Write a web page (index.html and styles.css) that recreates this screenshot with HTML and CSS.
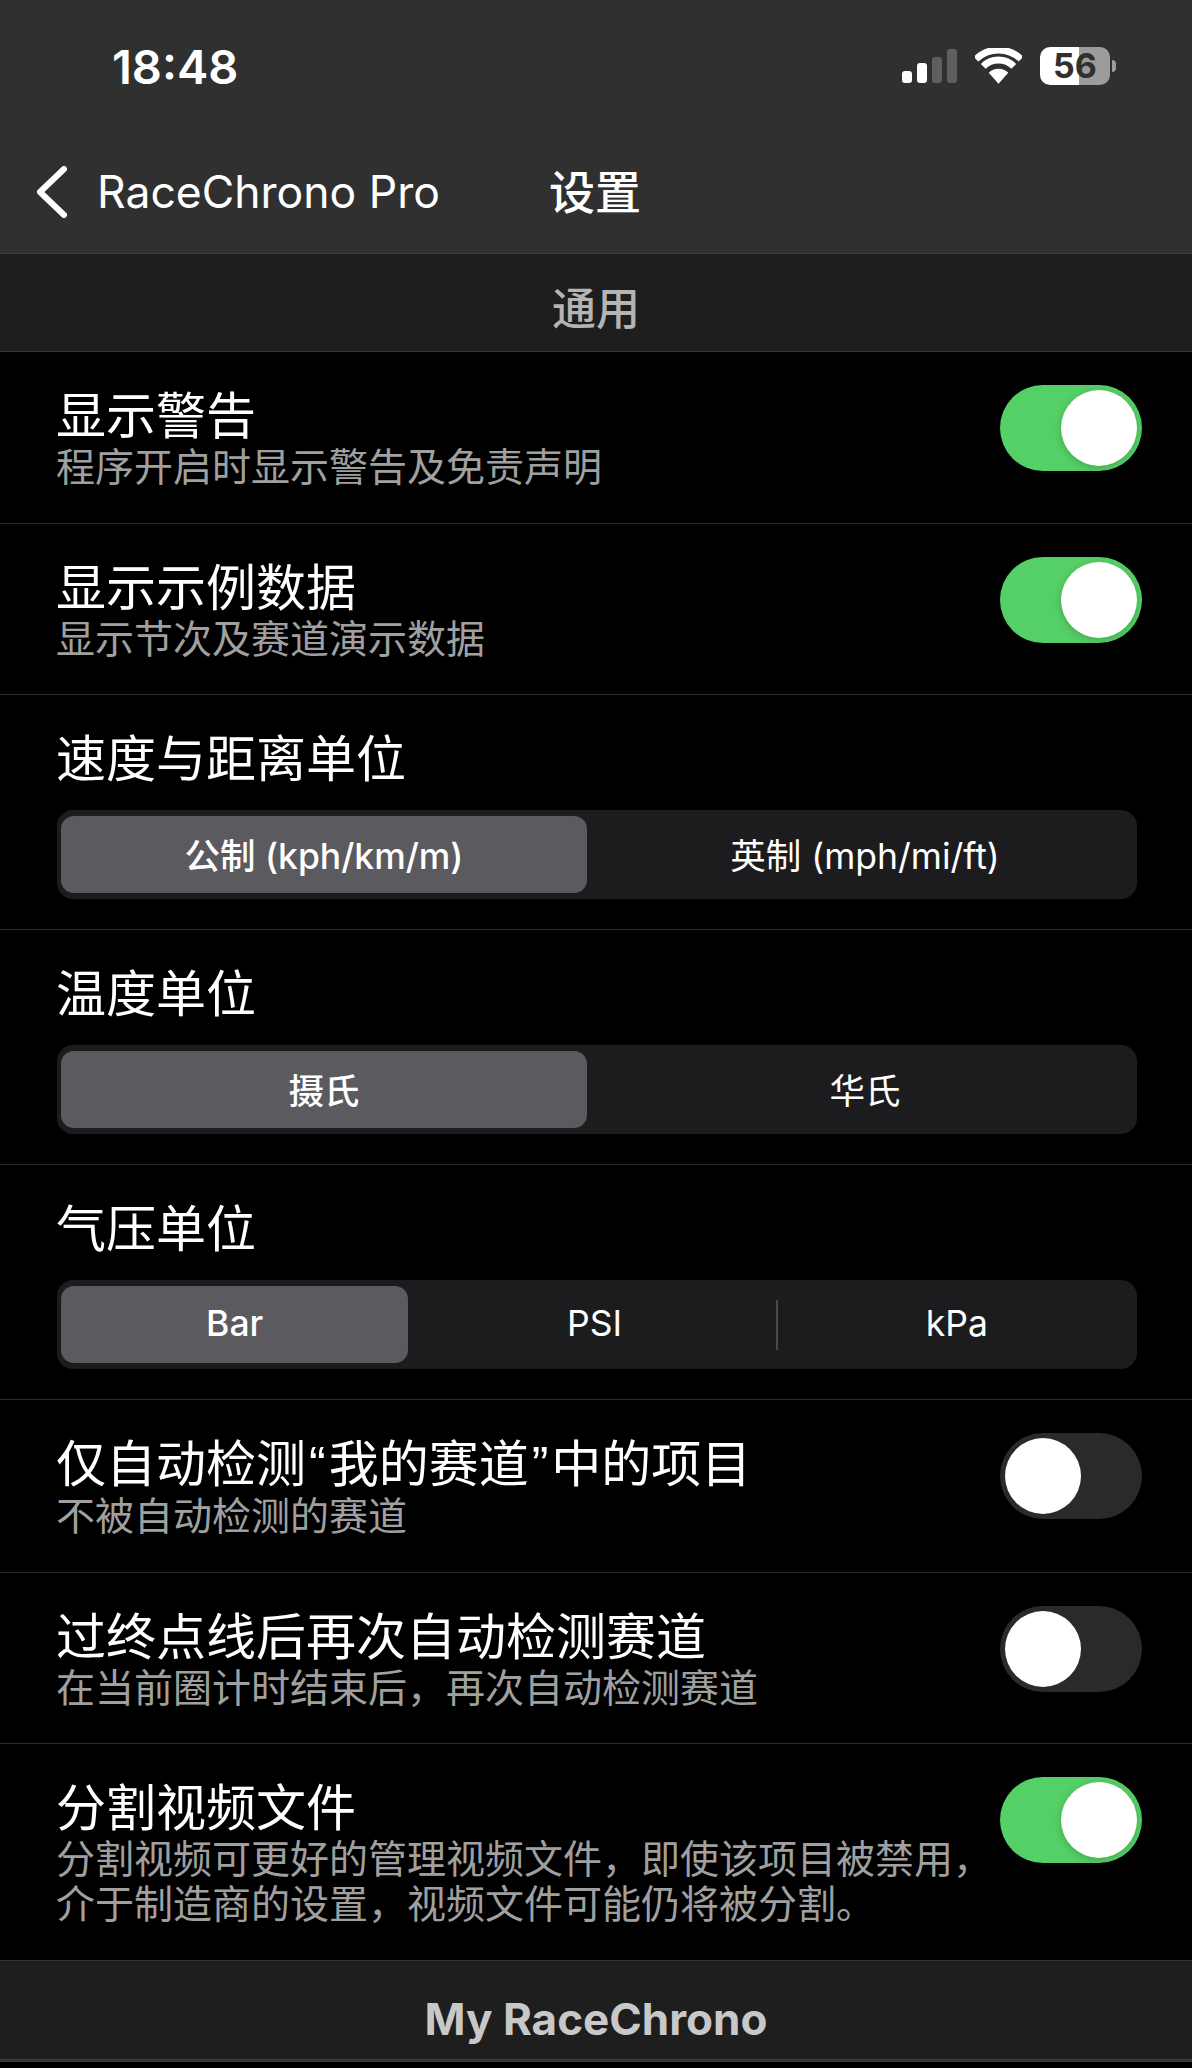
FILE: index.html
```html
<!DOCTYPE html>
<html lang="zh-CN">
<head>
  <meta charset="UTF-8" />
  <meta name="viewport" content="width=device-width, initial-scale=1.0" />
  <title>设置</title>
  <link rel="stylesheet" href="styles.css">
</head>
<body>

  <header class="top">
    <div class="status">
      <span class="time">18:48</span>
      <div class="status-icons">
        <div class="signal">
          <i class="bar b1"></i>
          <i class="bar b2"></i>
          <i class="bar b3 dim"></i>
          <i class="bar b4 dim"></i>
        </div>
        <svg class="wifi" viewBox="0 0 48 36" aria-hidden="true">
          <path d="M24 36 L14 25 A14 14 0 0 1 34 25 Z" fill="#fff"/>
          <path d="M8.4 18.4 A22 22 0 0 1 39.6 18.4" fill="none" stroke="#fff" stroke-width="7"/>
          <path d="M1 11 A33 33 0 0 1 47 11" fill="none" stroke="#fff" stroke-width="7"/>
        </svg>
        <div class="battery"><span>56</span></div>
        <i class="battery-nub"></i>
      </div>
    </div>
    <nav class="nav">
      <a class="back">
        <svg class="chevron" viewBox="0 0 32 52" aria-hidden="true">
          <path d="M28 3 L4 26 L28 49" fill="none" stroke="#fff" stroke-width="6" stroke-linecap="round" stroke-linejoin="round"/>
        </svg>
        RaceChrono Pro
      </a>
      <h1>设置</h1>
    </nav>
  </header>

  <div class="section">通用</div>

  <div class="row">
    <div class="row-text">
      <div class="title">显示警告</div>
      <div class="sub">程序开启时显示警告及免责声明</div>
    </div>
    <div class="toggle on"><i></i></div>
  </div>

  <div class="row">
    <div class="row-text">
      <div class="title">显示示例数据</div>
      <div class="sub">显示节次及赛道演示数据</div>
    </div>
    <div class="toggle on"><i></i></div>
  </div>

  <div class="row stacked">
    <div class="title">速度与距离单位</div>
    <div class="seg two">
      <div class="seg-item active">公制 (kph/km/m)</div>
      <div class="seg-item">英制 (mph/mi/ft)</div>
    </div>
  </div>

  <div class="row stacked">
    <div class="title">温度单位</div>
    <div class="seg two">
      <div class="seg-item active">摄氏</div>
      <div class="seg-item">华氏</div>
    </div>
  </div>

  <div class="row stacked">
    <div class="title">气压单位</div>
    <div class="seg three">
      <div class="seg-item active">Bar</div>
      <div class="seg-item">PSI</div>
      <div class="seg-item divided">kPa</div>
    </div>
  </div>

  <div class="row">
    <div class="row-text">
      <div class="title">仅自动检测<span class="quote">“</span>我的赛道<span class="quote">”</span>中的项目</div>
      <div class="sub">不被自动检测的赛道</div>
    </div>
    <div class="toggle"><i></i></div>
  </div>

  <div class="row">
    <div class="row-text">
      <div class="title">过终点线后再次自动检测赛道</div>
      <div class="sub">在当前圈计时结束后，再次自动检测赛道</div>
    </div>
    <div class="toggle"><i></i></div>
  </div>

  <div class="row last">
    <div class="row-text">
      <div class="title">分割视频文件</div>
      <div class="sub">分割视频可更好的管理视频文件，即使该项目被禁用，<br>介于制造商的设置，视频文件可能仍将被分割。</div>
    </div>
    <div class="toggle on"><i></i></div>
  </div>

  <div class="section foot">My RaceChrono</div>

</body>
</html>
```

FILE: styles.css
```css
body {
  margin: 0;
  background-color: #000;
  color: #fff;
  font-family: Inter, "Noto Sans CJK SC", sans-serif;
}

.top {
  height: 253px;
  background-color: #303030;
  border-bottom: 1px solid #3c3c3c;
}

.status {
  display: flex;
  justify-content: space-between;
  align-items: center;
  height: 132px;
  padding: 0 76px 0 112px;
}

.time {
  font-size: 47px;
  font-weight: 600;
}

.status-icons {
  display: flex;
  align-items: center;
}

.signal {
  display: flex;
  align-items: flex-end;
  gap: 5px;
  height: 34px;
  margin-right: 18px;
}

.bar {
  width: 10px;
  border-radius: 3px;
  background-color: #fff;
}

.bar.dim {
  background-color: #5f5f5f;
}

.b1 { height: 12px; }
.b2 { height: 20px; }
.b3 { height: 26px; }
.b4 { height: 34px; }

.wifi {
  width: 47px;
  height: 36px;
  margin-right: 18px;
}

.battery {
  width: 70px;
  height: 38px;
  border-radius: 10px;
  background: linear-gradient(to right, #fff 0 39px, #9c9c9c 39px);
  color: #303030;
  font-size: 34px;
  font-weight: 700;
  line-height: 38px;
  text-align: center;
}

.battery-nub {
  width: 4px;
  height: 12px;
  margin-left: 2px;
  border-radius: 0 6px 6px 0;
  background-color: #9c9c9c;
}

.nav {
  position: relative;
  display: flex;
  align-items: center;
  height: 120px;
  padding-left: 36px;
}

.back {
  display: flex;
  align-items: center;
  gap: 29px;
  font-size: 44.5px;
}

.chevron {
  width: 32px;
  height: 52px;
}

.nav h1 {
  position: absolute;
  left: 0;
  right: 2px;
  top: 32px;
  margin: 0;
  font-size: 46px;
  font-weight: 500;
  line-height: 56px;
  text-align: center;
}

.section {
  box-sizing: border-box;
  height: 98px;
  padding-top: 12px;
  background-color: #1e1e1e;
  border-bottom: 1px solid #383838;
  color: #b4b4b4;
  font-size: 44px;
  font-weight: 500;
  line-height: 86px;
  text-align: center;
}

.section.foot {
  height: 102px;
  padding-top: 15px;
  border-top: 1px solid #333;
  border-bottom: 3px solid #3a3a3a;
  color: #c8c8c8;
  font-size: 44px;
  font-weight: 700;
}

.row {
  display: flex;
  justify-content: space-between;
  align-items: flex-start;
  padding: 33px 50px 33.5px 56px;
  border-bottom: 1px solid #2e2e2e;
}

.row.last {
  padding-bottom: 34px;
  border-bottom: none;
}

.row.stacked {
  display: block;
  padding-bottom: 30px;
}

.title {
  padding-top: 3px;
  font-size: 50px;
  line-height: 56px;
}

.quote {
  padding: 0 3px;
  font-family: "Liberation Sans", sans-serif;
}

.sub {
  color: #a0a0a0;
  font-size: 39px;
  line-height: 45px;
}

.toggle {
  flex: none;
  display: flex;
  box-sizing: border-box;
  width: 142px;
  height: 86px;
  padding: 5px;
  border-radius: 43px;
  background-color: #2a2a2a;
}

.toggle.on {
  justify-content: flex-end;
  background-color: #55d066;
}

.toggle i {
  width: 76px;
  height: 76px;
  border-radius: 50%;
  background-color: #fff;
}

.toggle.on i {
  box-shadow: 0 2px 8px rgba(0, 0, 0, 0.2);
}

.seg {
  display: grid;
  box-sizing: border-box;
  height: 89px;
  margin: 23px 5px 0 1px;
  padding: 6px 4px;
  border-radius: 16px;
  background-color: #1c1c1e;
}

.seg.two {
  grid-template-columns: 1fr 1fr;
}

.seg.three {
  grid-template-columns: 1fr 1fr 1fr;
}

.seg-item {
  display: flex;
  justify-content: center;
  align-items: center;
  padding-bottom: 2px;
  font-size: 35.5px;
}

.seg-item.active {
  margin-right: 10px;
  border-radius: 13px;
  background-color: #5b5b5f;
  font-weight: 500;
}

.seg.three .seg-item:nth-child(2) {
  padding-right: 5px;
}

.seg-item.divided {
  padding-left: 5px;
  background: linear-gradient(#4a4a4a, #4a4a4a) left center / 2px 50px no-repeat;
}
```
